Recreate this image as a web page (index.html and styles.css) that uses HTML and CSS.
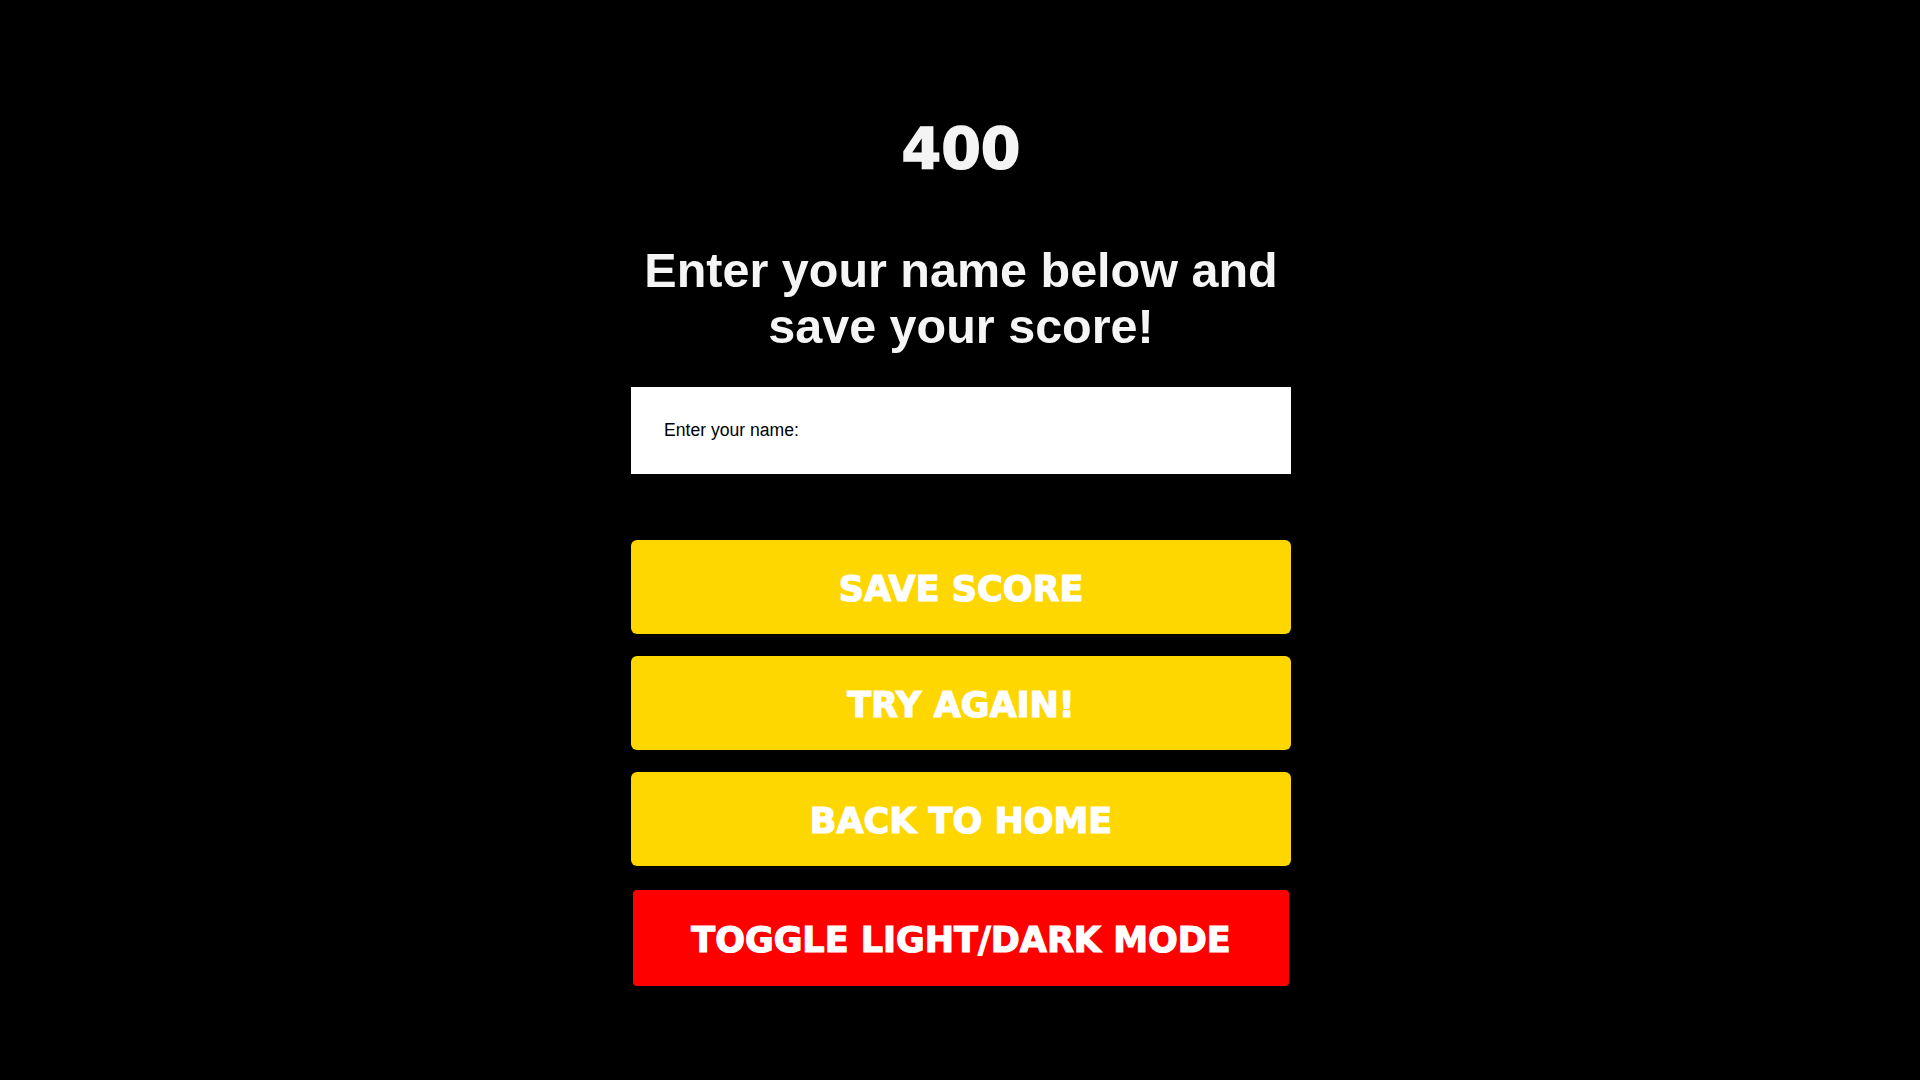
FILE: index.html
```html
<!DOCTYPE html>
<html lang="en">
<head>
<meta charset="utf-8">
<title>End</title>
<link rel="stylesheet" href="styles.css">
</head>
<body>
<main class="end">
  <h1 class="score">400</h1>
  <h2 class="prompt">Enter your name below and<br>save your score!</h2>
  <form class="save-form">
    <input class="name-input" type="text" placeholder="Enter your name:">
    <div class="actions">
      <button type="button" class="btn btn-yellow">Save Score</button>
      <button type="button" class="btn btn-yellow">Try Again!</button>
      <button type="button" class="btn btn-yellow">Back to Home</button>
    </div>
  </form>
  <button type="button" class="btn btn-toggle">Toggle Light/Dark Mode</button>
</main>
</body>
</html>
```
FILE: styles.css
```css
html, body {
  margin: 0;
  padding: 0;
  background: #000;
}

body {
  min-height: 1080px;
  padding-left: 2px;
  font-family: "Liberation Sans", Arial, sans-serif;
}

.end {
  width: 660px;
  margin: 0 auto;
  padding-top: 117px;
  display: flex;
  flex-direction: column;
  align-items: center;
}

.score {
  margin: 0;
  font-family: "DejaVu Sans", sans-serif;
  font-weight: bold;
  font-size: 57px;
  line-height: 65px;
  color: #f4f4f4;
  -webkit-text-stroke: 1.5px #f4f4f4;
}

.prompt {
  margin: 60px 0 0;
  font-family: "Liberation Sans", Arial, sans-serif;
  font-weight: bold;
  font-size: 48.5px;
  line-height: 56px;
  text-align: center;
  color: #f5f5f5;
}

.save-form {
  margin-top: 33px;
  width: 660px;
  display: flex;
  flex-direction: column;
}

.name-input {
  box-sizing: border-box;
  width: 660px;
  height: 87px;
  margin: 0;
  padding: 0 33px;
  border: none;
  outline: none;
  border-radius: 0;
  background: #fff;
  font-family: "Liberation Sans", Arial, sans-serif;
  font-size: 17.6px;
  color: #000;
}

.name-input::placeholder {
  color: #000;
  opacity: 1;
}

.actions {
  margin-top: 66px;
  display: flex;
  flex-direction: column;
  gap: 22px;
}

.btn {
  box-sizing: border-box;
  margin: 0;
  padding: 4px 0 0;
  border: none;
  font-family: "DejaVu Sans", sans-serif;
  font-weight: bold;
  font-size: 35px;
  text-transform: uppercase;
  color: #fff;
  -webkit-text-stroke: 1.2px #fff;
  cursor: pointer;
}

.btn-yellow {
  width: 660px;
  height: 94px;
  border-radius: 6px;
  background: #ffd700;
}

.btn-toggle {
  margin-top: 24px;
  width: 656px;
  height: 96px;
  border-radius: 4px;
  background: #ff0000;
}
```
